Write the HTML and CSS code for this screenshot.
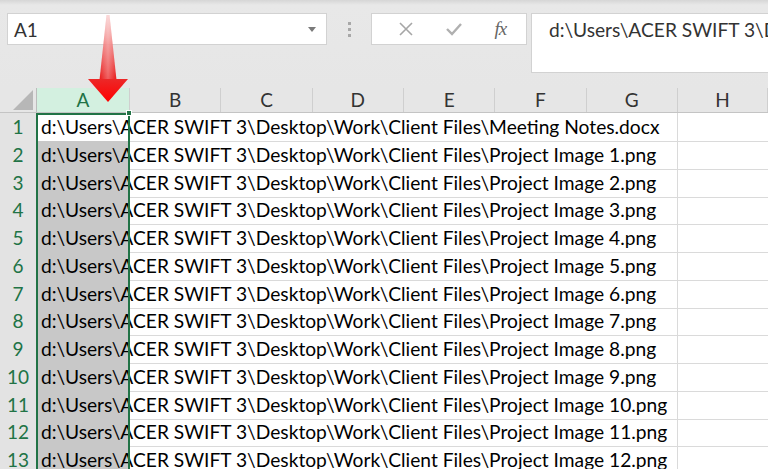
FILE: index.html
```html
<!DOCTYPE html>
<html lang="en">
<head>
    <meta charset="UTF-8">
    <title>Sheet</title>
    <link rel="stylesheet" href="styles.css">
</head>
<body>
    <div class="toolbar">
        <div class="name-box">
            <span>A1</span>
            <svg class="caret" width="8" height="5" viewBox="0 0 8 5"><polygon points="0,0 8,0 4,5" fill="#7a7a7a"/></svg>
        </div>
        <div class="dots"><i></i><i></i><i></i></div>
        <div class="fx-buttons">
            <svg width="16" height="16" viewBox="0 0 16 16"><path d="M2 2 L14 14 M14 2 L2 14" stroke="#a6a6a6" stroke-width="1.6" fill="none"/></svg>
            <svg width="18" height="16" viewBox="0 0 18 16"><path d="M2 8 L7 13 L16 3" stroke="#b0b0b0" stroke-width="2.4" fill="none"/></svg>
            <span class="fx">fx</span>
        </div>
        <div class="formula">d:\Users\ACER SWIFT 3\Desktop\Work\Client Files\Meeting Notes.docx</div>
    </div>

    <div class="sheet">
        <div class="row head">
            <div class="corner"><svg width="22" height="22" viewBox="0 0 22 22"><polygon points="1,21 21,21 21,1" fill="#b7b7b7"/></svg></div>
            <div class="col sel">A</div>
            <div class="col">B</div>
            <div class="col">C</div>
            <div class="col">D</div>
            <div class="col">E</div>
            <div class="col">F</div>
            <div class="col">G</div>
            <div class="col">H</div>
        </div>

        <div class="row active"><div class="num">1</div><div class="cell-a"><span>d:\Users\ACER SWIFT 3\Desktop\Work\Client Files\Meeting Notes.docx</span></div><div class="cell-span"></div><div class="cell-h"></div></div>
        <div class="row"><div class="num">2</div><div class="cell-a"><span>d:\Users\ACER SWIFT 3\Desktop\Work\Client Files\Project Image 1.png</span></div><div class="cell-span"></div><div class="cell-h"></div></div>
        <div class="row"><div class="num">3</div><div class="cell-a"><span>d:\Users\ACER SWIFT 3\Desktop\Work\Client Files\Project Image 2.png</span></div><div class="cell-span"></div><div class="cell-h"></div></div>
        <div class="row"><div class="num">4</div><div class="cell-a"><span>d:\Users\ACER SWIFT 3\Desktop\Work\Client Files\Project Image 3.png</span></div><div class="cell-span"></div><div class="cell-h"></div></div>
        <div class="row"><div class="num">5</div><div class="cell-a"><span>d:\Users\ACER SWIFT 3\Desktop\Work\Client Files\Project Image 4.png</span></div><div class="cell-span"></div><div class="cell-h"></div></div>
        <div class="row"><div class="num">6</div><div class="cell-a"><span>d:\Users\ACER SWIFT 3\Desktop\Work\Client Files\Project Image 5.png</span></div><div class="cell-span"></div><div class="cell-h"></div></div>
        <div class="row"><div class="num">7</div><div class="cell-a"><span>d:\Users\ACER SWIFT 3\Desktop\Work\Client Files\Project Image 6.png</span></div><div class="cell-span"></div><div class="cell-h"></div></div>
        <div class="row"><div class="num">8</div><div class="cell-a"><span>d:\Users\ACER SWIFT 3\Desktop\Work\Client Files\Project Image 7.png</span></div><div class="cell-span"></div><div class="cell-h"></div></div>
        <div class="row"><div class="num">9</div><div class="cell-a"><span>d:\Users\ACER SWIFT 3\Desktop\Work\Client Files\Project Image 8.png</span></div><div class="cell-span"></div><div class="cell-h"></div></div>
        <div class="row"><div class="num">10</div><div class="cell-a"><span>d:\Users\ACER SWIFT 3\Desktop\Work\Client Files\Project Image 9.png</span></div><div class="cell-span"></div><div class="cell-h"></div></div>
        <div class="row"><div class="num">11</div><div class="cell-a"><span>d:\Users\ACER SWIFT 3\Desktop\Work\Client Files\Project Image 10.png</span></div><div class="cell-span"></div><div class="cell-h"></div></div>
        <div class="row"><div class="num">12</div><div class="cell-a"><span>d:\Users\ACER SWIFT 3\Desktop\Work\Client Files\Project Image 11.png</span></div><div class="cell-span"></div><div class="cell-h"></div></div>
        <div class="row"><div class="num">13</div><div class="cell-a"><span>d:\Users\ACER SWIFT 3\Desktop\Work\Client Files\Project Image 12.png</span></div><div class="cell-span"></div><div class="cell-h"></div></div>

        <!-- selection frame of column A, drawn over the cell text -->
        <div class="col-frame"></div>
        <div class="handle"></div>
    </div>

    <!-- red pointer over column A -->
    <svg class="arrow" width="46" height="94" viewBox="0 0 46 94">
        <defs>
            <linearGradient id="shaft" x1="0" y1="0" x2="0" y2="1">
                <stop offset="0" stop-color="#f4a6a6" stop-opacity="0.6"/>
                <stop offset="0.45" stop-color="#f06a6a" stop-opacity="0.9"/>
                <stop offset="1" stop-color="#e81818"/>
            </linearGradient>
            <linearGradient id="shine" x1="0" y1="0" x2="1" y2="0">
                <stop offset="0" stop-color="#fff" stop-opacity="0"/>
                <stop offset="0.5" stop-color="#fff" stop-opacity="0.3"/>
                <stop offset="1" stop-color="#fff" stop-opacity="0"/>
            </linearGradient>
            <linearGradient id="head" x1="0" y1="0" x2="0" y2="1">
                <stop offset="0" stop-color="#ec2828"/>
                <stop offset="1" stop-color="#ff0000"/>
            </linearGradient>
        </defs>
        <polygon points="20.5,3 23.5,3 30.5,68 13.5,68" fill="url(#shaft)"/>
        <polygon points="20.5,3 23.5,3 30.5,68 13.5,68" fill="url(#shine)"/>
        <polygon points="2,67 42,67 22,90" fill="url(#head)"/>
    </svg>
</body>
</html>
```

FILE: styles.css
```css
* {
    box-sizing: border-box;
    margin: 0;
    padding: 0;
}

body {
    width: 768px;
    height: 469px;
    overflow: hidden;
    background-color: #e6e6e6;
    font-family: Lato, 'Open Sans', sans-serif;
    position: relative;
}

.toolbar {
    height: 88px;
    display: flex;
    align-items: flex-start;
    padding-top: 13px;
    background: linear-gradient(#d6d6d6, #e8e8e8 5px, #e6e6e6);
}

.name-box {
    margin-left: 7px;
    width: 320px;
    height: 32px;
    background-color: #fff;
    border: 1px solid #d2d2d2;
    display: flex;
    align-items: center;
    justify-content: space-between;
    padding: 0 10px 0 6px;
    font-size: 19px;
    color: #333;
}

.dots {
    width: 44px;
    height: 32px;
    display: flex;
    flex-direction: column;
    align-items: center;
    justify-content: center;
    gap: 3px;
}

.dots i {
    width: 3px;
    height: 3px;
    background-color: #a8a8a8;
}

.fx-buttons {
    width: 156px;
    height: 32px;
    background-color: #fff;
    border: 1px solid #d2d2d2;
    display: flex;
    align-items: center;
    justify-content: space-around;
    padding: 0 4px 0 10px;
}

.fx {
    font-family: 'Liberation Serif', serif;
    font-style: italic;
    font-size: 19px;
    color: #666;
    letter-spacing: -1px;
}

.formula {
    margin-left: 4px;
    flex: 1;
    height: 60px;
    background-color: #fff;
    border: 1px solid #d2d2d2;
    border-right: none;
    padding: 4px 0 0 17px;
    font-size: 19.2px;
    color: #333;
    white-space: nowrap;
    overflow: hidden;
}

.sheet {
    position: relative;
}

.row {
    display: grid;
    grid-template-columns: 36px 93px repeat(6, 91.33px) 91px;
    height: 27.75px;
    background-color: #fff;
}

.row.head {
    height: 25px;
    background-color: #e6e6e6;
    border-bottom: 1px solid #c4c4c4;
}

.corner {
    display: flex;
    align-items: flex-end;
    justify-content: flex-end;
    padding: 0 2px 1px 0;
}

.col {
    border-left: 1px solid #cfcfcf;
    text-align: center;
    font-size: 19px;
    line-height: 24px;
    color: #333;
}

.col.sel {
    background-color: #d3f0e0;
    color: #217346;
    border-left: 1px solid #bcbcbc;
}

.col:last-child {
    border-right: 1px solid #cfcfcf;
}

.num {
    background-color: #e3e3e3;
    border-bottom: 1px solid #ececec;
    color: #217346;
    font-size: 19px;
    text-align: center;
    line-height: 28px;
}

.cell-a {
    background-color: #c8c8c8;
    border-bottom: 1px solid #d8d8d8;
    display: flex;
    align-items: flex-end;
    padding: 0 0 3px 5px;
}

.row.active .cell-a {
    background-color: #fff;
    border-bottom-color: #dadada;
}

.cell-a span {
    position: relative;
    z-index: 1;
    white-space: nowrap;
    font-size: 19.2px;
    color: #000;
}

.cell-span {
    grid-column: 3 / 9;
    border-bottom: 1px solid #dadada;
}

.cell-h {
    border-left: 1px solid #dadada;
    border-bottom: 1px solid #dadada;
}

.col-frame {
    position: absolute;
    left: 36px;
    top: 25px;
    bottom: 0;
    width: 94px;
    border-left: 2px solid #217346;
    border-right: 2px solid #217346;
    border-top: 2px solid #217346;
    z-index: 2;
}

.handle {
    position: absolute;
    left: 126px;
    top: 22px;
    width: 6px;
    height: 6px;
    background-color: #217346;
    border: 1px solid #fff;
    z-index: 3;
}

.arrow {
    position: absolute;
    left: 86px;
    top: 12px;
}
```
